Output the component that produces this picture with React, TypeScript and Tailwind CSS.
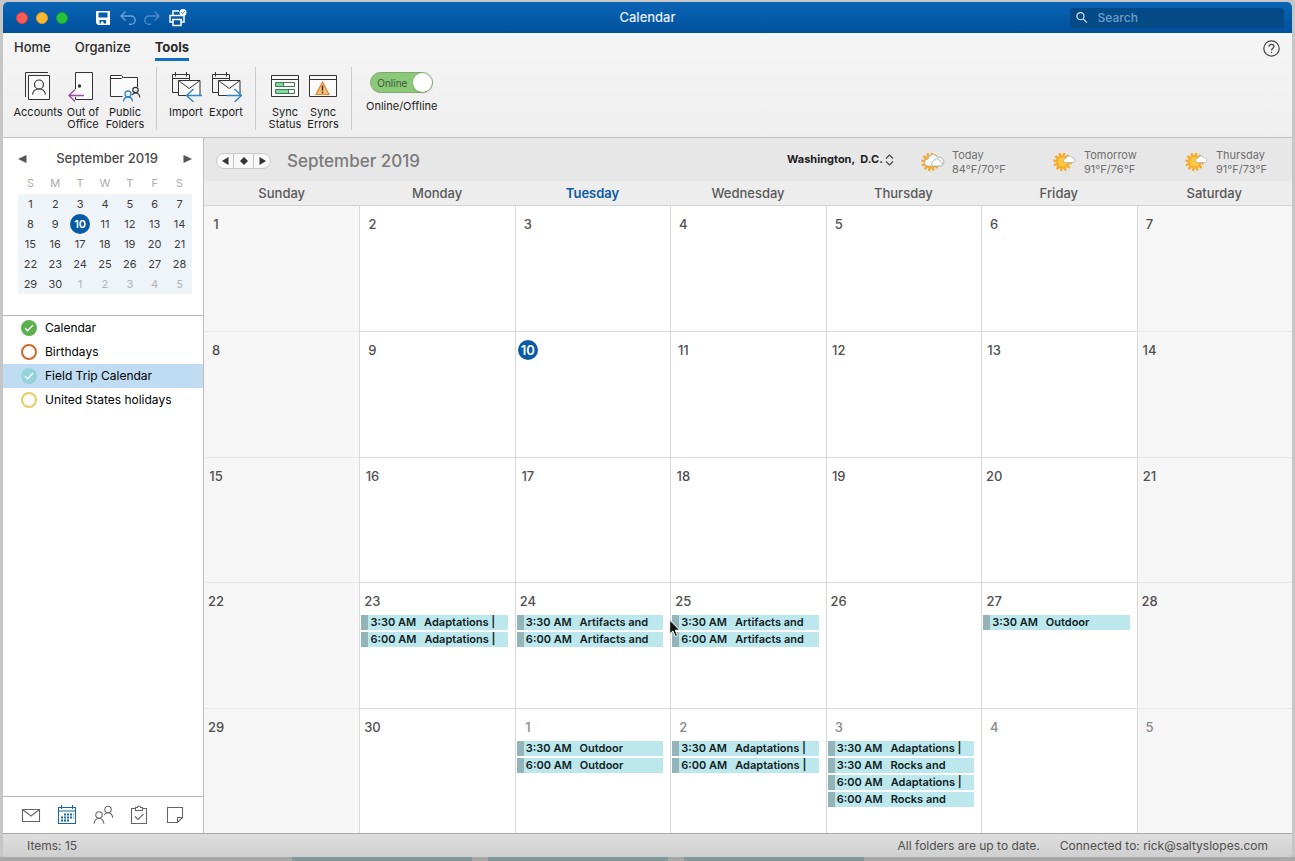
import type { ReactNode } from 'react';
import { clsx } from 'clsx';

type CalendarEvent = { time: string; title: string };

const weekdays = ['Sunday', 'Monday', 'Tuesday', 'Wednesday', 'Thursday', 'Friday', 'Saturday'];

const days = Array.from({ length: 35 }, (_, i) => ({
  index: i,
  label: i < 30 ? i + 1 : i - 29,
  nextMonth: i >= 30,
  weekend: i % 7 === 0 || i % 7 === 6,
  today: i === 9,
}));

const weeks = [0, 1, 2, 3, 4].map((w) => days.slice(w * 7, w * 7 + 7));

const events: Record<number, CalendarEvent[]> = {
  22: [
    { time: '3:30 AM', title: 'Adaptations |' },
    { time: '6:00 AM', title: 'Adaptations |' },
  ],
  23: [
    { time: '3:30 AM', title: 'Artifacts and' },
    { time: '6:00 AM', title: 'Artifacts and' },
  ],
  24: [
    { time: '3:30 AM', title: 'Artifacts and' },
    { time: '6:00 AM', title: 'Artifacts and' },
  ],
  26: [{ time: '3:30 AM', title: 'Outdoor' }],
  30: [
    { time: '3:30 AM', title: 'Outdoor' },
    { time: '6:00 AM', title: 'Outdoor' },
  ],
  31: [
    { time: '3:30 AM', title: 'Adaptations |' },
    { time: '6:00 AM', title: 'Adaptations |' },
  ],
  32: [
    { time: '3:30 AM', title: 'Adaptations |' },
    { time: '3:30 AM', title: 'Rocks and' },
    { time: '6:00 AM', title: 'Adaptations |' },
    { time: '6:00 AM', title: 'Rocks and' },
  ],
};

const forecast = [
  { day: 'Today', temp: '84°F/70°F', cloudy: true },
  { day: 'Tomorrow', temp: '91°F/76°F', cloudy: false },
  { day: 'Thursday', temp: '91°F/73°F', cloudy: false },
];

function App() {
  return (
    <div className="flex min-h-screen flex-col bg-[#c6c6c6] font-[Inter,sans-serif] text-[#404040]">
      <div className="mx-[3px] mt-[2px] flex flex-1 flex-col overflow-hidden rounded-[5px] bg-[#f2f2f2]">
        <TitleBar />
        <Ribbon />
        <div className="flex flex-1">
          <Sidebar />
          <MonthView />
        </div>
        <footer className="flex h-6 items-center justify-between border-t border-[#a9a9a9] bg-linear-to-b from-[#dedede] to-[#cfcfcf] px-6 text-xs text-[#505050]">
          <span>Items: 15</span>
          <span className="flex gap-5">
            <span>All folders are up to date.</span>
            <span>Connected to: rick@saltyslopes.com</span>
          </span>
        </footer>
      </div>
      <div className="flex h-1 gap-4 bg-[#a8a8a8] pl-[292px]">
        <span className="w-[180px] bg-[#809998]" />
        <span className="w-[180px] bg-[#809998]" />
        <span className="w-[180px] bg-[#809998]" />
      </div>
    </div>
  );
}

function TitleBar() {
  return (
    <header className="grid h-[31px] grid-cols-[1fr_auto_1fr] items-center bg-linear-to-b from-[#0a65b5] to-[#02509a]">
      <div className="flex items-center pl-[13px]">
        <div className="flex gap-2">
          <button aria-label="Close" className="size-3 rounded-full border border-[#d9423f] bg-[#fc5b57]" />
          <button aria-label="Minimize" className="size-3 rounded-full border border-[#d99a2b] bg-[#fdb92f]" />
          <button aria-label="Zoom" className="size-3 rounded-full border border-[#1f9f31] bg-[#27c33e]" />
        </div>
        <div className="ml-[27px] flex items-center gap-2 text-white">
          <button aria-label="Save">
            <svg width="16" height="16" viewBox="0 0 16 16" fill="currentColor" fillRule="evenodd">
              <path d="M1 1h14v14H3l-2-2zM3.500 2.500v5h9v-5zM4.500 10v3.500H6V11.500h2.500v2h2.500V10z" />
            </svg>
          </button>
          <button aria-label="Undo" className="ml-px text-[#6ba3d8]">
            <svg width="16" height="16" viewBox="0 0 16 16" fill="none" stroke="currentColor" strokeWidth="1.400">
              <path d="M5.500 1.500L1 6l4.500 4.500M1.200 6H11a3.700 3.700 0 0 1 0 8.300H9" />
            </svg>
          </button>
          <button aria-label="Redo" className="text-[#4a8ccb]">
            <svg width="16" height="16" viewBox="0 0 16 16" fill="none" stroke="currentColor" strokeWidth="1.400">
              <path d="M10.500 1.500L15 6l-4.500 4.500M14.800 6H5a3.700 3.700 0 0 0 0 8.300h2" />
            </svg>
          </button>
          <button aria-label="Print">
            <svg width="20" height="18" viewBox="0 0 20 18" fill="none" stroke="currentColor" strokeWidth="1.500">
              <path d="M5 6V2h6M5 13H2V6.500h14V13h-3" />
              <path d="M5 10.500h8v6H5zM4 10.500h10" />
              <circle cx="15" cy="3.500" r="3.500" fill="currentColor" stroke="none" />
              <path d="M13.300 3.500l1.300 1.200 2.200-2.400" stroke="#1f78c4" strokeWidth="1" />
            </svg>
          </button>
        </div>
      </div>
      <h1 className="text-[13px] font-medium text-[#e6eff8]">Calendar</h1>
      <label className="mr-2 flex h-5 w-[214px] items-center gap-2.5 justify-self-end rounded-[3px] bg-[#034a87] px-1.5">
        <svg width="13" height="13" viewBox="0 0 13 13" fill="none" stroke="#e3eef8" strokeWidth="1.300">
          <circle cx="5" cy="5" r="4" />
          <path d="M8 8l4.300 4.300" />
        </svg>
        <input
          aria-label="Search"
          placeholder="Search"
          className="w-full bg-transparent text-xs font-medium outline-none placeholder:text-[#6f9fc9]"
        />
      </label>
    </header>
  );
}

function Ribbon() {
  return (
    <section className="border-b border-[#c1c1c1] bg-linear-to-b from-[#f5f5f5] to-[#efefef] pb-[7px]">
      <div className="flex h-[34px] items-start justify-between pr-3">
        <nav className="flex gap-6 pl-[11px] text-[13px] leading-5 text-[#2b2b2b]">
          <button className="mt-1 h-6 pb-1 font-medium">Home</button>
          <button className="mt-1 h-6 pb-1 font-medium">Organize</button>
          <button className="mt-1 h-6 border-b-[3px] border-[#0f6fc6] pb-px font-bold">Tools</button>
        </nav>
        <button aria-label="Help" className="mt-[7px]">
          <svg width="17" height="17" viewBox="0 0 17 17" fill="none" stroke="#444" strokeWidth="1.200">
            <circle cx="8.500" cy="8.500" r="7.700" />
            <path d="M6 6.800C6 5.200 7 4.300 8.500 4.300S11 5.200 11 6.500C11 8.200 8.500 8.300 8.500 10.400" />
            <path d="M8.500 11.700v1.400" />
          </svg>
        </button>
      </div>
      <div className="flex text-[11px] leading-3 text-[#1c1c1c]">
        <div className="flex h-[63px] border-r border-[#cbcbcb] pr-2.5 pl-[11px]">
          <Tool label="Accounts" className="w-12">
            <svg width="26" height="30" viewBox="0 0 26 30" fill="none" stroke="#333">
              <path d="M.5 25V.5H23" />
              <path d="M3.500 3.500h21v24h-21z" fill="#fafafa" />
              <circle cx="14" cy="12.500" r="4.500" strokeWidth="1.200" />
              <path d="M7.500 22.500c.5-3.500 3-5.500 6.500-5.500s6 2 6.500 5.500" strokeWidth="1.200" />
            </svg>
          </Tool>
          <Tool label="Out of Office" className="w-[42px]">
            <svg width="30" height="30" viewBox="0 0 30 30" fill="none" stroke="#333">
              <path d="M7.500 17V.5h17v27h-17V25" fill="#fafafa" />
              <circle cx="11.500" cy="14" r="1.700" fill="#333" stroke="none" />
              <path d="M16 23.500H1M7 17.500l-6 6 6 6" stroke="#9b4aa5" strokeWidth="1.300" />
            </svg>
          </Tool>
          <Tool label="Public Folders" className="w-[42px]">
            <svg width="31" height="30" viewBox="0 0 31 30" fill="none" stroke="#333">
              <path d="M12.500 24.500H.5V3.500h11l2 2h14V15" fill="#fafafa" />
              <path d="M.5 6.500h11l1.500-1.500" />
              <circle cx="25.500" cy="18" r="2.700" strokeWidth="1.200" />
              <path d="M22 23c1-1.500 2-2 3.500-2 2.500 0 4 1.500 4.500 4.500" strokeWidth="1.200" />
              <g stroke="#2f86c9" strokeWidth="1.300">
                <circle cx="18" cy="22" r="3" />
                <path d="M13.500 29.500c.3-3 2-4.500 4.500-4.500s4.200 1.500 4.500 4.500" />
              </g>
            </svg>
          </Tool>
        </div>
        <div className="flex h-[63px] border-r border-[#cbcbcb] pr-[9px] pl-[9px]">
          <Tool label="Import" className="w-10">
            <MailCalendar arrow="M30 23.500H14.500M21.500 17l-7 6.500 7 6.500" />
          </Tool>
          <Tool label="Export" className="w-10">
            <MailCalendar arrow="M14.500 23.500H29.500M22.500 17l7 6.500-7 6.500" />
          </Tool>
        </div>
        <div className="flex h-[63px] border-r border-[#cbcbcb] pr-[9px] pl-2.5">
          <Tool label="Sync Status" className="w-[38px]">
            <svg width="28" height="30" viewBox="0 -3 28 30" fill="none" stroke="#333">
              <path d="M.5.5h27v21H.5zM.5 4.500h27" fill="#fafafa" />
              <path d="M4.500 7.500h8v4h-8zM4.500 14.500h13v4h-13z" fill="#7fd8a0" stroke="none" />
              <path d="M4.500 7.500h19v4h-19zM12.500 7.500v4M4.500 14.500h19v4h-19zM17.500 14.500v4" stroke="#3c7a52" />
            </svg>
          </Tool>
          <Tool label="Sync Errors" className="w-[38px]">
            <svg width="28" height="30" viewBox="0 -3 28 30" fill="none" stroke="#333">
              <path d="M.5.5h27v21H.5zM.5 4.500h27" fill="#fafafa" />
              <path d="M13.500 7l6.500 12.500H7z" fill="#fbbf77" stroke="#e58434" strokeWidth="1.200" />
              <path d="M13.500 10.500v5M13.500 16.500v1.700" strokeWidth="1.500" />
            </svg>
          </Tool>
        </div>
        <div className="flex flex-col items-center gap-[7px] pt-[5px] pl-[14px]">
          <button
            id="online-switch"
            role="switch"
            aria-checked="true"
            className="flex h-[21px] w-[63px] items-center justify-between rounded-full border border-[#82a777] bg-[#8bc878] pl-1.5 text-[10px] text-[#3d5a35]"
          >
            Online
            <span className="size-[19px] rounded-full bg-white shadow-sm" />
          </button>
          <label htmlFor="online-switch">Online/Offline</label>
        </div>
      </div>
    </section>
  );
}

function Tool({ label, className, children }: { label: string; className: string; children: ReactNode }) {
  return (
    <button className={clsx('flex flex-col items-center gap-1 pt-[5px]', className)}>
      {children}
      <span>{label}</span>
    </button>
  );
}

function MailCalendar({ arrow }: { arrow: string }) {
  return (
    <svg width="32" height="30" viewBox="-2 0 32 30" fill="none" stroke="#333">
      <path d="M6 20.500H.5v-18h17v6M.5 6.500h17M3.500 0v4.500M14.500 0v4.500" />
      <path d="M6.500 8.500h21.500v15H6.500z" fill="#fafafa" />
      <path d="M6.500 8.500l10.700 8 10.800-8" />
      <path d={arrow} stroke="#2f86c9" strokeWidth="1.400" />
    </svg>
  );
}

function Sidebar() {
  return (
    <aside className="flex w-[201px] shrink-0 flex-col border-r border-[#bdbdbd] bg-white">
      <div className="h-[178px] border-b border-[#bdbdbd] pt-[11px] pr-[11px] pl-[15px]">
        <div className="flex h-5 items-center justify-between text-[#555]">
          <button aria-label="Previous month">
            <svg width="9" height="8" viewBox="0 0 9 8" fill="currentColor">
              <path d="M8.500 0v8L0 4z" />
            </svg>
          </button>
          <span className="pl-1 text-[13px] font-medium text-[#4a4a4a]">September 2019</span>
          <button aria-label="Next month">
            <svg width="9" height="8" viewBox="0 0 9 8" fill="currentColor">
              <path d="M.5 0v8L9 4z" />
            </svg>
          </button>
        </div>
        <table className="mt-1 w-full table-fixed text-center text-[11px] text-[#3c3c3c]">
          <thead>
            <tr className="h-[21px] text-[#ababab]">
              {weekdays.map((d) => (
                <th key={d} className="p-0 font-normal">
                  {d[0]}
                </th>
              ))}
            </tr>
          </thead>
          <tbody className="bg-[#eff4f9]">
            {weeks.map((week, i) => (
              <tr key={i} className="h-5">
                {week.map((d) => (
                  <td key={d.index} className={clsx('p-0', d.nextMonth && 'text-[#b0b4b8]')}>
                    {d.today ? (
                      <span className="mx-auto flex size-5 items-center justify-center rounded-full bg-[#075aa3] font-semibold text-white">
                        {d.label}
                      </span>
                    ) : (
                      d.label
                    )}
                  </td>
                ))}
              </tr>
            ))}
          </tbody>
        </table>
      </div>
      <div className="flex-1 text-xs text-black">
        <CalendarItem label="Calendar" dot="bg-[#5bb050] border-[#5bb050]" checked />
        <CalendarItem label="Birthdays" dot="border-[#d2672a]" />
        <CalendarItem label="Field Trip Calendar" dot="bg-[#93d3d9] border-[#93d3d9]" checked selected />
        <CalendarItem label="United States holidays" dot="border-[#e9cb62]" />
      </div>
      <nav className="flex h-[37px] items-center border-t border-[#bdbdbd] pl-2.5">
        <NavButton label="Mail">
          <path d="M1.500 4.500h17v12h-17zM1.500 4.500L10 11l8.500-6.500" />
        </NavButton>
        <NavButton label="Calendar" active>
          <path d="M1.500 2.500h17v16h-17zM1.500 6h17M4.500 0v4M15.500 0v4" />
          <path d="M7 9.500h9.500M4 12.500h12.500M4 15.500h8" strokeWidth="2" strokeDasharray="2 1" />
        </NavButton>
        <NavButton label="People">
          <circle cx="6" cy="10" r="3.200" />
          <path d="M1 18.800c.5-3.800 2-5.600 5-5.600s4.500 1.800 5 5.600" />
          <circle cx="15" cy="4.500" r="3.200" />
          <path d="M11 10c1-1.600 2.300-2.300 4-2.300 2.800 0 4.300 2 4.700 5" />
        </NavButton>
        <NavButton label="Tasks">
          <path d="M6.500 3.500h-4v15h15v-15h-4M6.500 5.500v-3h2c0-2 3-2 3 0h2v3z" />
          <path d="M6 11.500l3 3 5.500-5.500" />
        </NavButton>
        <NavButton label="Notes">
          <path d="M2.500 2.500h15v10l-5 5h-10zM12.500 17.500v-5h5" />
        </NavButton>
      </nav>
    </aside>
  );
}

function CalendarItem({
  label,
  dot,
  checked,
  selected,
}: {
  label: string;
  dot: string;
  checked?: boolean;
  selected?: boolean;
}) {
  return (
    <label className={clsx('relative flex h-6 items-center gap-2 pl-[18px]', selected && 'bg-[#bfdcf2]')}>
      <input type="checkbox" defaultChecked={checked} className="sr-only" />
      <span className={clsx('flex size-4 items-center justify-center rounded-full border-2', dot)}>
        {checked && (
          <svg width="10" height="8" viewBox="0 0 10 8" fill="none" stroke="white" strokeWidth="1.300">
            <path d="M1 4l2.700 2.700L9 1" />
          </svg>
        )}
      </span>
      {label}
    </label>
  );
}

function NavButton({ label, active, children }: { label: string; active?: boolean; children: ReactNode }) {
  return (
    <button
      aria-label={label}
      className={clsx('flex w-9 justify-center', active ? 'text-[#17699f]' : 'text-[#666]')}
    >
      <svg width="20" height="20" viewBox="0 0 20 20" fill="none" stroke="currentColor" strokeWidth="1.100">
        {children}
      </svg>
    </button>
  );
}

function MonthView() {
  return (
    <main className="flex flex-1 flex-col">
      <div className="flex h-[43px] items-center bg-[#e7e7e7] pr-[21px] pl-3">
        <div className="mt-0.5 flex h-4 items-center divide-x divide-[#c4c4c4] rounded-full border border-[#c9c9c9] bg-[#f8f8f8] text-[#333]">
          <button aria-label="Previous" className="flex h-full w-[17px] items-center justify-center">
            <svg width="7" height="8" viewBox="0 0 7 8" fill="currentColor">
              <path d="M6.500 0v8L0 4z" />
            </svg>
          </button>
          <button aria-label="Go to today" className="flex h-full w-5 items-center justify-center">
            <svg width="8" height="8" viewBox="0 0 8 8" fill="currentColor">
              <path d="M4 0l4 4-4 4-4-4z" />
            </svg>
          </button>
          <button aria-label="Next" className="flex h-full w-4 items-center justify-center">
            <svg width="7" height="8" viewBox="0 0 7 8" fill="currentColor">
              <path d="M.5 0v8L7 4z" />
            </svg>
          </button>
        </div>
        <h2 className="ml-4 pt-1 text-[17px] font-medium text-[#7a7a7a]">September 2019</h2>
        <div className="ml-auto flex items-center gap-0.5">
          <select
            aria-label="Location"
            className="appearance-none bg-transparent text-[11px] font-bold text-[#1d1d1d]"
          >
            <option>{'Washington,\u00a0 D.C.'}</option>
          </select>
          <svg width="9" height="12" viewBox="0 0 9 12" fill="none" stroke="#444" strokeWidth="1.200">
            <path d="M1 4.500L4.500 1 8 4.500M1 7.500L4.500 11 8 7.500" />
          </svg>
        </div>
        <div className="ml-[27px] flex gap-[46px] pt-1">
          {forecast.map((f) => (
            <div key={f.day} className="flex w-[86px] items-center gap-[7px] text-[11px] leading-[14px] text-[#707070]">
              <WeatherIcon cloudy={f.cloudy} />
              <div className="whitespace-nowrap">
                <div>{f.day}</div>
                <div>{f.temp}</div>
              </div>
            </div>
          ))}
        </div>
      </div>
      <div className="grid h-[25px] grid-cols-7 items-center border-b border-[#d4d4d4] bg-[#ededed] pt-px text-center text-[13px] font-medium text-[#595959]">
        {weekdays.map((d) => (
          <div key={d} className={clsx(d === 'Tuesday' && 'font-semibold text-[#0b5aa3]')}>
            {d}
          </div>
        ))}
      </div>
      <div className="grid flex-1 auto-rows-fr grid-cols-7">
        {days.map((d) => (
          <div
            key={d.index}
            className={clsx(
              'relative min-w-0 pt-2',
              d.index % 7 !== 0 && 'border-l border-l-[#d9d9d9]',
              d.index > 6 && 'border-t',
              d.weekend ? 'border-t-[#e8e8e8] bg-[#f6f6f6]' : 'border-t-[#d9d9d9] bg-white',
            )}
          >
            <div
              className={clsx(
                'ml-0.5 size-5 text-center text-[13px] leading-5',
                d.today ? 'rounded-full bg-[#075aa3] font-semibold text-white' : 'font-medium',
                !d.today && (d.nextMonth ? 'text-[#8a8a8a]' : 'text-[#505050]'),
              )}
            >
              {d.label}
            </div>
            <div className="mt-1 mr-[7px] ml-px flex flex-col gap-0.5">
              {events[d.index]?.map((e, i) => (
                <div
                  key={i}
                  className="flex h-[15px] items-center gap-2 overflow-hidden border-l-[7px] border-[#93b5ba] bg-[#bce8ed] pl-0.5 text-[11px] font-semibold whitespace-nowrap text-[#101c1e]"
                >
                  <span>{e.time}</span>
                  <span>{e.title}</span>
                </div>
              ))}
            </div>
            {d.index === 24 && (
              <svg className="absolute top-9 -left-0.5 z-10" width="12" height="19" viewBox="0 0 12 19">
                <path d="M.7 1v14l3.200-3 2.300 5.500 2.400-1-2.300-5.300h4.500z" fill="#111" stroke="#fff" />
              </svg>
            )}
          </div>
        ))}
      </div>
    </main>
  );
}

function WeatherIcon({ cloudy }: { cloudy: boolean }) {
  return (
    <svg width="24" height="20" viewBox="0 0 24 20" className="shrink-0">
      <circle cx="9.500" cy="10" r="7.500" fill="none" stroke="#f4a82c" strokeWidth="3.500" strokeDasharray="2.200 1.727" />
      <circle cx="9.500" cy="10" r="7" fill="#f7ae2c" />
      <circle cx="9.500" cy="10" r="4.500" fill="#fcc945" />
      {cloudy ? (
        <>
          <path
            d="M7 14a3.500 3.500 0 0 1 0-7 5 5 0 0 1 9.500-1.500A4.500 4.500 0 0 1 20 14z"
            fill="#f8f8f8"
            stroke="#a8a8a8"
            strokeWidth=".8"
          />
          <path
            d="M12 14a2.800 2.800 0 0 1 .5-5 3.500 3.500 0 0 1 6.500 0 2.700 2.700 0 0 1 1 5z"
            fill="#fff"
            stroke="#a8a8a8"
            strokeWidth=".8"
          />
        </>
      ) : (
        <path
          d="M12.500 10.500a2 2 0 0 1 .3-4 3.500 3.500 0 0 1 6.500-.5 2.500 2.500 0 0 1 1.500 4.500z"
          fill="#fff"
          stroke="#b5b5b5"
          strokeWidth=".8"
        />
      )}
    </svg>
  );
}

export default App;
